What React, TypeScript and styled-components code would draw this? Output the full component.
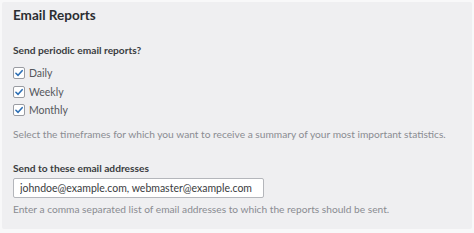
import React, { useState } from 'react';
import styled, { createGlobalStyle } from 'styled-components';

const GlobalStyle = createGlobalStyle`
    html, body {
        margin: 0;
        padding: 0;
        background: #f8f8f9;
    }
    body {
        font-family: Lato, "Noto Sans", sans-serif;
        -webkit-font-smoothing: antialiased;
    }
`;

type Timeframe = 'daily' | 'weekly' | 'monthly';

const TIMEFRAMES: { key: Timeframe; label: string }[] = [
    { key: 'daily', label: 'Daily' },
    { key: 'weekly', label: 'Weekly' },
    { key: 'monthly', label: 'Monthly' },
];

const CheckIcon = () => (
    <svg viewBox="0 0 12 12" width="10" height="10" aria-hidden="true">
        <path d="M2.3 6.3 L4.9 8.8 L9.8 3.2" fill="none" stroke="#2d6fb5" strokeWidth="1.9" strokeLinecap="round" strokeLinejoin="round" />
    </svg>
);

const App: React.FC = () => {
    const [checked, setChecked] = useState<Record<Timeframe, boolean>>({
        daily: true,
        weekly: true,
        monthly: true,
    });
    const [emails, setEmails] = useState('johndoe@example.com, webmaster@example.com');

    return (
        <>
            <GlobalStyle />
            <Panel>
                <Title>Email Reports</Title>

                <Field>
                    <Label>Send periodic email reports?</Label>
                    <CheckList>
                        {TIMEFRAMES.map(tf => (
                            <CheckRow key={tf.key}>
                                <HiddenInput
                                    type="checkbox"
                                    checked={checked[tf.key]}
                                    onChange={() => setChecked(c => ({ ...c, [tf.key]: !c[tf.key] }))}
                                />
                                <Box>{checked[tf.key] && <CheckIcon />}</Box>
                                <span>{tf.label}</span>
                            </CheckRow>
                        ))}
                    </CheckList>
                    <Help>Select the timeframes for which you want to receive a summary of your most important statistics.</Help>
                </Field>

                <Field $second>
                    <Label>Send to these email addresses</Label>
                    <TextInput value={emails} onChange={e => setEmails(e.target.value)} />
                    <Help $tight>Enter a comma separated list of email addresses to which the reports should be sent.</Help>
                </Field>
            </Panel>
        </>
    );
};

// --- STYLED COMPONENTS ---
const Panel = styled.section`
    margin: 2px;
    width: 470px;
    height: 227px;
    box-sizing: border-box;
    background: #efeff1;
    border-radius: 2px;
    padding: 4px 11px 0 11px;
`;

const Title = styled.h2`
    margin: 0;
    font-size: 13.5px;
    font-weight: 700;
    color: #2b2d31;
    line-height: 18px;
`;

const Field = styled.div<{ $second?: boolean }>`
    display: flex;
    flex-direction: column;
    margin-top: ${({ $second }) => ($second ? '20px' : '19px')};
`;

const Label = styled.div`
    font-size: 10.2px;
    font-weight: 700;
    color: #3a3c40;
    line-height: 14px;
`;

const CheckList = styled.div`
    display: flex;
    flex-direction: column;
    gap: 1.5px;
    margin-top: 7.5px;
`;

const CheckRow = styled.label`
    display: flex;
    align-items: center;
    gap: 4px;
    height: 17px;
    font-size: 10.5px;
    color: #55575c;
    cursor: pointer;
`;

const HiddenInput = styled.input`
    display: none;
`;

const Box = styled.span`
    width: 12px;
    height: 12px;
    box-sizing: border-box;
    border: 1px solid #9a9ca2;
    border-radius: 2px;
    background: #fff;
    display: flex;
    align-items: center;
    justify-content: center;
`;

const Help = styled.p<{ $tight?: boolean }>`
    margin: ${({ $tight }) => ($tight ? '4px' : '8.5px')} 0 0;
    font-size: 10.2px;
    line-height: 14px;
    color: #8a8c91;
    white-space: nowrap;
`;

const TextInput = styled.input`
    margin-top: 3px;
    width: 251px;
    height: 20px;
    box-sizing: border-box;
    border: 1px solid #b4b6bb;
    border-radius: 2px;
    background: #fff;
    padding: 0 6px;
    font-family: inherit;
    font-size: 10.5px;
    color: #3a3c40;
    outline: none;
`;

export default App;
